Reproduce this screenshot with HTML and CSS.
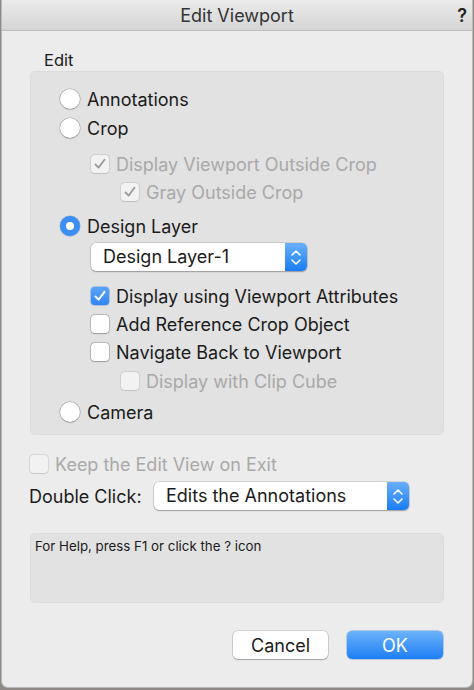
FILE: index.html
```html
<!DOCTYPE html>
<html>
<head>
<meta charset="utf-8">
<link rel="stylesheet" href="styles.css">
</head>
<body>
<div class="window">
  <div class="titlebar">
    <span class="title">Edit Viewport</span>
    <span class="help-q">?</span>
  </div>
  <div class="content">
    <div class="group-label">Edit</div>
    <div class="group">
      <div class="row radio-row r-annot"><span class="radio"></span><span class="lbl">Annotations</span></div>
      <div class="row radio-row r-crop"><span class="radio"></span><span class="lbl">Crop</span></div>
      <div class="row check-row lvl1 disabled r-dvoc"><span class="check checked-dis"><svg viewBox="0 0 18 18" width="18" height="18"><path d="M4.5 9.5 L7.6 12.6 L13.5 4.8" fill="none" stroke="#9a9a9a" stroke-width="1.8" stroke-linecap="round" stroke-linejoin="round"/></svg></span><span class="lbl">Display Viewport Outside Crop</span></div>
      <div class="row check-row lvl2 disabled"><span class="check checked-dis"><svg viewBox="0 0 18 18" width="18" height="18"><path d="M4.5 9.5 L7.6 12.6 L13.5 4.8" fill="none" stroke="#9a9a9a" stroke-width="1.8" stroke-linecap="round" stroke-linejoin="round"/></svg></span><span class="lbl">Gray Outside Crop</span></div>
      <div class="row radio-row r-dl"><span class="radio selected"></span><span class="lbl">Design Layer</span></div>
      <div class="popup popup-layer">
        <span class="popup-text">Design Layer-1</span>
        <span class="stepper"><svg viewBox="0 0 22 28" width="22" height="28"><path d="M7 12 L11 8 L15 12" fill="none" stroke="#fff" stroke-width="1.6" stroke-linecap="round" stroke-linejoin="round"/><path d="M7 17 L11 21 L15 17" fill="none" stroke="#fff" stroke-width="1.6" stroke-linecap="round" stroke-linejoin="round"/></svg></span>
      </div>
      <div class="row check-row lvl1 r-dva"><span class="check checked"><svg viewBox="0 0 18 18" width="18" height="18"><path d="M4.5 9.5 L7.6 12.6 L13.5 4.8" fill="none" stroke="#fff" stroke-width="2" stroke-linecap="round" stroke-linejoin="round"/></svg></span><span class="lbl">Display using Viewport Attributes</span></div>
      <div class="row check-row lvl1"><span class="check"></span><span class="lbl">Add Reference Crop Object</span></div>
      <div class="row check-row lvl1"><span class="check"></span><span class="lbl">Navigate Back to Viewport</span></div>
      <div class="row check-row lvl2 disabled r-clip"><span class="check dis"></span><span class="lbl">Display with Clip Cube</span></div>
      <div class="row radio-row r-cam"><span class="radio"></span><span class="lbl">Camera</span></div>
    </div>
    <div class="row check-row disabled keep"><span class="check dis"></span><span class="lbl">Keep the Edit View on Exit</span></div>
    <div class="dbl-row">
      <span class="dbl-label">Double Click:</span>
      <div class="popup popup-dbl">
        <span class="popup-text">Edits the Annotations</span>
        <span class="stepper"><svg viewBox="0 0 22 28" width="22" height="28"><path d="M7 12 L11 8 L15 12" fill="none" stroke="#fff" stroke-width="1.6" stroke-linecap="round" stroke-linejoin="round"/><path d="M7 17 L11 21 L15 17" fill="none" stroke="#fff" stroke-width="1.6" stroke-linecap="round" stroke-linejoin="round"/></svg></span>
      </div>
    </div>
    <div class="helpbox">For Help, press F1 or click the ? icon</div>
    <div class="buttons">
      <button class="btn cancel">Cancel</button>
      <button class="btn ok">OK</button>
    </div>
  </div>
</div>
</body>
</html>
```
FILE: styles.css
```css
html, body {
  margin: 0;
  padding: 0;
}
body {
  background: #8d8984;
  width: 474px;
  height: 690px;
  overflow: hidden;
  font-family: "Inter", "Liberation Sans", sans-serif;
  color: #1b1b1b;
}
.window {
  margin: 0 2px;
  height: 687px;
  background: #ececec;
  border-radius: 0 0 6px 6px;
  box-shadow: 0 0 0 1px #b9b9b9;
  display: flex;
  flex-direction: column;
}
.titlebar {
  background: linear-gradient(#ebebeb, #d5d5d5);
  border-bottom: 1px solid #bdbdbd;
  display: flex;
  align-items: center;
  justify-content: center;
  position: relative;
  box-sizing: border-box;
  height: 31px;
}
.title {
  font-size: 18px;
  color: #333;
}
.help-q {
  position: absolute;
  right: 5px;
  top: 5px;
  font-size: 18px;
  font-weight: 600;
  color: #222;
}
.content {
  padding: 0 28px;
  display: flex;
  flex-direction: column;
}
.group-label {
  margin-top: 20px;
  margin-left: 14px;
  font-size: 16.5px;
  line-height: 18px;
  height: 20px;
}
.group {
  background: #e2e2e2;
  border: 1px solid #dcdcdc;
  border-radius: 5px;
  padding: 13px 0 8px 0;
  display: flex;
  flex-direction: column;
  height: 364px;
  box-sizing: border-box;
}
.row {
  height: 28px;
  display: flex;
  align-items: center;
  font-size: 18px;
}
.radio-row {
  padding-left: 29px;
}
.radio {
  width: 20px;
  height: 20px;
  border-radius: 50%;
  background: #fff;
  box-shadow: 0 0 0 0.5px rgba(0,0,0,0.25), 0 0.5px 1.5px rgba(0,0,0,0.25);
  margin-right: 7px;
  flex: none;
  box-sizing: border-box;
}
.radio.selected {
  border: 6.5px solid #3b8ff2;
  background: #fff;
  box-shadow: 0 0 0 0.5px rgba(30,100,200,0.4);
}
.r-crop { margin-top: 1px; }
.r-dvoc { margin-top: 8px; }
.r-dl { margin-top: 6px; }
.r-dva { margin-top: 11px; }
.r-clip { margin-top: 1px; }
.r-cam { margin-top: 3px; }
.lvl1 { padding-left: 60px; }
.lvl2 { padding-left: 90px; }
.check {
  width: 18px;
  height: 18px;
  border-radius: 3.5px;
  background: #fff;
  box-shadow: 0 0 0 0.5px rgba(0,0,0,0.3), 0 0.5px 1.5px rgba(0,0,0,0.2);
  margin-right: 7px;
  flex: none;
  display: flex;
}
.check.checked {
  background: linear-gradient(#5aa4f7, #2f86f2);
  box-shadow: 0 0 0 0.5px rgba(20,90,200,0.5);
}
.check.checked-dis, .check.dis {
  background: #f2f2f2;
  box-shadow: 0 0 0 0.5px rgba(0,0,0,0.15), 0 0.5px 1px rgba(0,0,0,0.08);
}
.disabled .lbl {
  color: #a9a9a9;
}
.popup {
  display: flex;
  height: 28px;
  background: #fff;
  border-radius: 5px;
  box-shadow: 0 0 0 0.5px rgba(0,0,0,0.2), 0 1px 1.5px rgba(0,0,0,0.25);
  box-sizing: border-box;
  overflow: hidden;
  flex: none;
}
.popup-layer {
  margin-top: 3px;
  margin-left: 60px;
  width: 216px;
}
.popup-text {
  flex: 1;
  font-size: 18px;
  line-height: 28px;
  padding-left: 12px;
}
.stepper {
  width: 22px;
  height: 28px;
  background: linear-gradient(#69b0fa, #1a7cf4);
  display: block;
  flex: none;
}
.stepper svg { display: block; }
.keep {
  margin-top: 15px;
}
.dbl-row {
  margin-top: 4px;
  display: flex;
  align-items: center;
  height: 28px;
}
.dbl-label {
  font-size: 18px;
  width: 125px;
  margin-left: -1px;
}
.popup-dbl {
  width: 255px;
}
.helpbox {
  margin-top: 23px;
  height: 70px;
  background: #e2e2e2;
  border: 1px solid #dcdcdc;
  border-radius: 5px;
  box-sizing: border-box;
  font-size: 13.3px;
  padding: 3px 0 0 4px;
  line-height: 18px;
}
.buttons {
  margin-top: 28px;
  display: flex;
  justify-content: flex-end;
  gap: 19px;
  padding-right: 1px;
}
.btn {
  height: 28px;
  width: 95px;
  border: none;
  border-radius: 5px;
  font-family: inherit;
  font-size: 18px;
  padding: 0;
}
.cancel {
  background: #fff;
  color: #1b1b1b;
  box-shadow: 0 0 0 0.5px rgba(0,0,0,0.22), 0 1px 1.5px rgba(0,0,0,0.22);
}
.ok {
  width: 96px;
  background: linear-gradient(#6cb2fa, #1e7ff4);
  color: #fff;
  box-shadow: 0 0 0 0.5px rgba(20,90,200,0.5);
}
```
